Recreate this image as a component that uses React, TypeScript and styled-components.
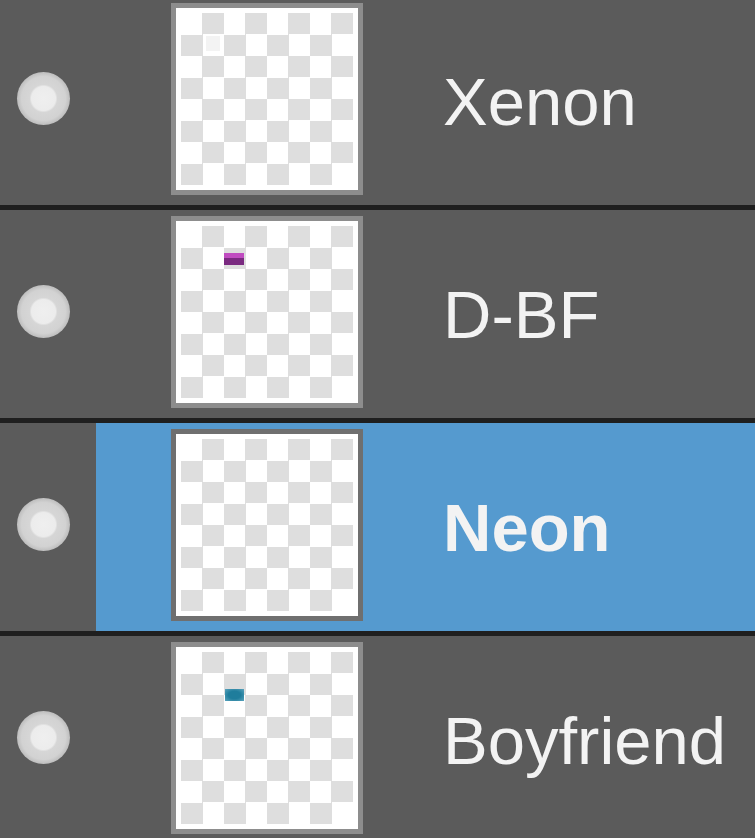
import styled, { createGlobalStyle } from "styled-components";

const GlobalStyle = createGlobalStyle`
  html, body {
    margin: 0;
    padding: 0;
    background: #5b5b5b;
    overflow: hidden;
  }
`;

const Panel = styled.div`
  display: flex;
  flex-direction: column;
  width: 755px;
  margin-top: -3px;
  background: #5b5b5b;
`;

const Separator = styled.div`
  height: 5px;
  background: #1f1f1f;
`;

const Row = styled.div`
  display: grid;
  grid-template-columns: 96px 1fr;
  height: 208px;
`;

const VisibilityCell = styled.div`
  display: flex;
  align-items: flex-start;
  padding: 75px 0 0 17px;
`;

const Radio = styled.div`
  width: 53px;
  height: 53px;
  border-radius: 50%;
  background: radial-gradient(
    circle at 50% 50%,
    #efefef 0,
    #ececec 12px,
    #d6d6d6 14px,
    #d2d2d2 22px,
    #bdbdbd 26.5px
  );
`;

const LayerCell = styled.div<{ $selected?: boolean }>`
  display: flex;
  align-items: flex-start;
  gap: 80px;
  padding: 6px 0 0 75px;
  background: ${(p) => (p.$selected ? "#559acf" : "#5b5b5b")};
`;

const Thumb = styled.div<{ $selected?: boolean }>`
  flex-shrink: 0;
  box-sizing: border-box;
  width: 192px;
  height: 192px;
  display: flex;
  align-items: center;
  justify-content: center;
  background: #ffffff;
  border: 5px solid ${(p) => (p.$selected ? "#6f6f6f" : "#8d8d8d")};
`;

const Checker = styled.div`
  position: relative;
  width: 172px;
  height: 172px;
  background-color: #ffffff;
  background-image: conic-gradient(
    #dedede 25%,
    #ffffff 0 50%,
    #dedede 0 75%,
    #ffffff 0
  );
  background-size: 43px 43px;
`;

const Mark = styled.div<{ $x: number; $y: number; $w: number; $h: number; $bg: string }>`
  position: absolute;
  left: ${(p) => p.$x}px;
  top: ${(p) => p.$y}px;
  width: ${(p) => p.$w}px;
  height: ${(p) => p.$h}px;
  background: ${(p) => p.$bg};
`;

const Label = styled.span<{ $selected?: boolean }>`
  align-self: center;
  margin-top: -6px;
  font-family: "Liberation Sans", Arial, sans-serif;
  font-size: 67px;
  font-weight: ${(p) => (p.$selected ? 700 : 400)};
  color: #f3f3f3;
  white-space: nowrap;
`;

type Layer = {
  name: string;
  selected?: boolean;
  mark?: { x: number; y: number; w: number; h: number; bg: string };
};

const layers: Layer[] = [
  {
    name: "Xenon",
    mark: { x: 25, y: 23, w: 14, h: 15, bg: "rgba(240, 240, 240, 0.8)" },
  },
  {
    name: "D-BF",
    mark: {
      x: 43,
      y: 27,
      w: 20,
      h: 12,
      bg: "linear-gradient(#c04cc0 0 40%, #7a2a80 40%)",
    },
  },
  { name: "Neon", selected: true },
  {
    name: "Boyfriend",
    mark: {
      x: 44,
      y: 37,
      w: 19,
      h: 12,
      bg: "radial-gradient(ellipse at center, #1f7d9c 45%, #5aa3bd 100%)",
    },
  },
];

export default function App() {
  return (
    <>
      <GlobalStyle />
      <Panel>
        {layers.map((layer, i) => (
          <div key={layer.name}>
            {i > 0 && <Separator />}
            <Row>
              <VisibilityCell>
                <Radio />
              </VisibilityCell>
              <LayerCell $selected={layer.selected}>
                <Thumb $selected={layer.selected}>
                  <Checker>
                    {layer.mark && (
                      <Mark
                        $x={layer.mark.x}
                        $y={layer.mark.y}
                        $w={layer.mark.w}
                        $h={layer.mark.h}
                        $bg={layer.mark.bg}
                      />
                    )}
                  </Checker>
                </Thumb>
                <Label $selected={layer.selected}>{layer.name}</Label>
              </LayerCell>
            </Row>
          </div>
        ))}
      </Panel>
    </>
  );
}
